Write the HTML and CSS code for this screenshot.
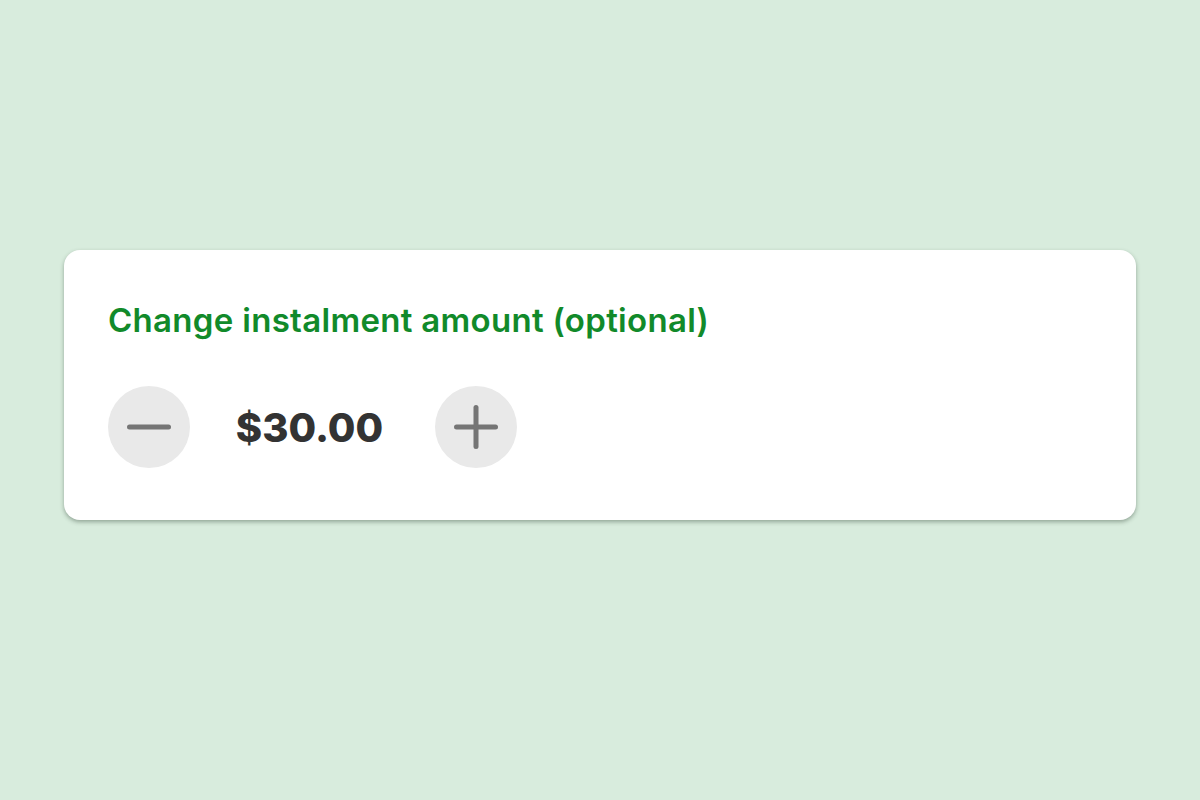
FILE: index.html
```html
<!DOCTYPE html>
<html>
<head>
<meta charset="utf-8">
<link rel="stylesheet" href="styles.css">
</head>
<body>
<div class="page">
  <div class="card">
    <h2 class="title">Change instalment amount (optional)</h2>
    <div class="stepper">
      <button class="step" aria-label="Decrease">
        <svg width="44" height="44" viewBox="0 0 44 44"><line x1="2.5" y1="22" x2="41.5" y2="22" stroke="#757575" stroke-width="5" stroke-linecap="round"/></svg>
      </button>
      <div class="amount">$30.00</div>
      <button class="step" aria-label="Increase">
        <svg width="44" height="44" viewBox="0 0 44 44"><line x1="2.5" y1="22" x2="41.5" y2="22" stroke="#757575" stroke-width="5" stroke-linecap="round"/><line x1="22" y1="2.5" x2="22" y2="41.5" stroke="#757575" stroke-width="5" stroke-linecap="round"/></svg>
      </button>
    </div>
  </div>
</div>
</body>
</html>
```
FILE: styles.css
```css
html, body {
  margin: 0;
  padding: 0;
}
body {
  background: #d8ecdd;
  font-family: Inter, Lato, sans-serif;
}
.page {
  width: 1200px;
  height: 800px;
  display: flex;
  align-items: center;
  justify-content: center;
}
.card {
  width: 1072px;
  height: 270px;
  box-sizing: border-box;
  background: #fff;
  border-radius: 16px;
  box-shadow: 0 2px 4px rgba(60, 80, 65, 0.45);
  padding: 42px 44px;
  margin-top: -30px;
}
.title {
  margin: 0;
  color: #118a2a;
  font-size: 33px;
  font-weight: 600;
  line-height: 56px;
  letter-spacing: 0.3px;
}
.stepper {
  margin-top: 38px;
  display: flex;
  align-items: center;
}
.step {
  width: 82px;
  height: 82px;
  border-radius: 50%;
  border: none;
  background: #e9e9e9;
  padding: 0;
  display: flex;
  align-items: center;
  justify-content: center;
}
.amount {
  width: 245px;
  text-align: center;
  box-sizing: border-box;
  padding-right: 6px;
  font-size: 40px;
  font-weight: 800;
  color: #333;
}
```
